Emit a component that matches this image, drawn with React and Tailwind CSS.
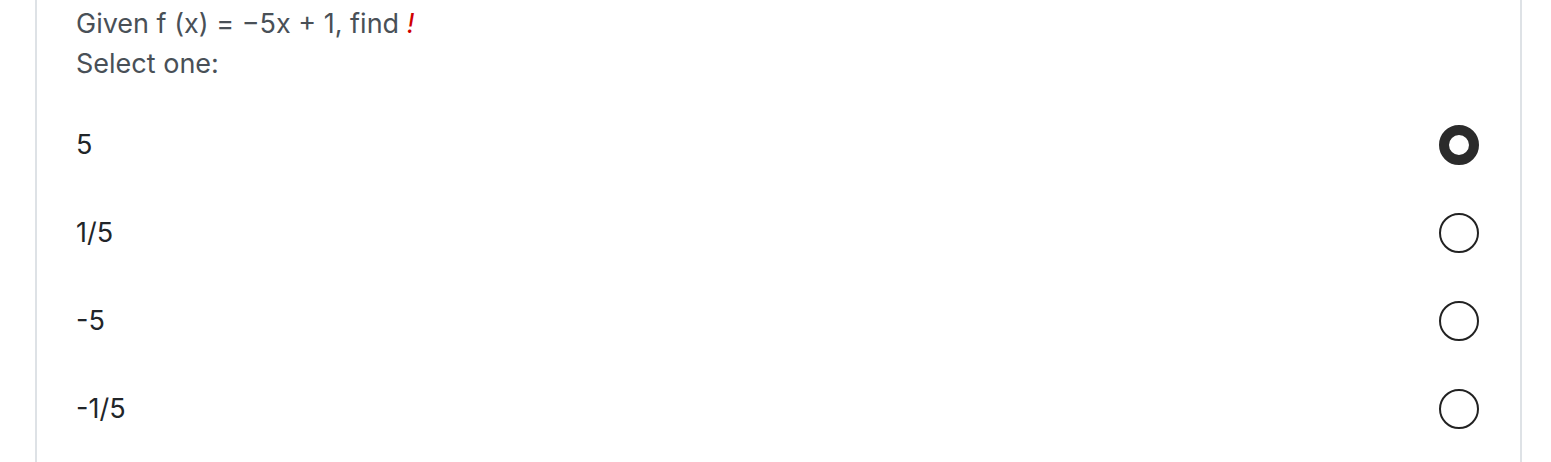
import React from "react";

const options = ["5", "1/5", "-5", "-1/5"];

const Radio = ({ checked }) => (
  <span
    className={`block h-[40px] w-[40px] rounded-full bg-white ${
      checked ? "border-[10px] border-[#2b2b2b]" : "border-2 border-[#222222]"
    }`}
  />
);

const App = () => {
  const [selected, setSelected] = React.useState(0);

  return (
    <div
      className="h-[462px] w-full overflow-hidden bg-white pl-[35px] pr-[29px]"
      style={{ fontFamily: "Inter, 'Liberation Sans', sans-serif" }}
    >
      <div className="h-full border-x-2 border-[#dee2e6] pl-[39px] pr-[41px]">
        <div className="pt-[4px] text-[27px] leading-[40px] text-[#495057]">
          <div>
            Given f (x) = −5x + 1, find <span className="italic text-[#d00000]">!</span>
          </div>
          <div>Select one:</div>
        </div>

        <div className="mt-[17px]">
          {options.map((opt, i) => (
            <label
              key={opt}
              onClick={() => setSelected(i)}
              className="flex h-[88px] cursor-pointer items-center justify-between text-[27px] text-[#212529]"
            >
              <span className="pt-[1px]">{opt}</span>
              <Radio checked={selected === i} />
            </label>
          ))}
        </div>
      </div>
    </div>
  );
};

export default App;
